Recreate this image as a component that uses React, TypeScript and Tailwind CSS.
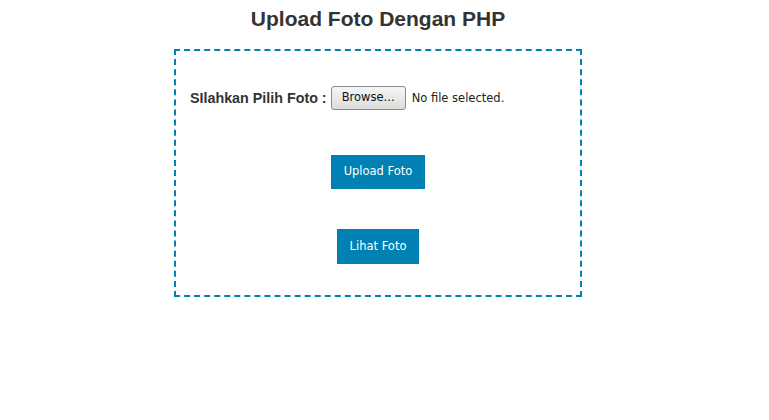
export default function App() {
  const ui = { fontFamily: '"DejaVu Sans", Verdana, sans-serif' };
  return (
    <div className="w-[756px] bg-white" style={{ fontFamily: '"Liberation Sans", Arial, sans-serif' }}>
      <h1 className="pt-[7px] h-[49px] text-center text-[21px] leading-[24px] font-bold text-[#333333]">
        Upload Foto Dengan PHP
      </h1>
      <div className="mx-auto w-[408px] h-[248px] border-2 border-dashed border-[#0080b3] flex flex-col">
        <div className="mt-[35px] h-[24px] flex items-center pl-[14px]">
          <span className="text-[14.3px] font-bold text-[#333333] translate-y-[1px]">SIlahkan Pilih Foto :</span>
          <span
            className="ml-[4px] h-[24px] w-[75px] flex items-center justify-center rounded-[3px] border border-[#8a8a8a] bg-gradient-to-b from-[#f6f6f6] to-[#dcdcdc] text-[11.5px] text-[#111]"
            style={ui}
          >
            Browse...
          </span>
          <span className="ml-[6px] text-[11.5px] text-[#222] translate-y-[1px]" style={ui}>
            No file selected.
          </span>
        </div>
        <div className="mt-[45px] flex justify-center">
          <button className="h-[34px] w-[94px] bg-[#0080b3] text-white text-[11.5px]" style={ui}>
            Upload Foto
          </button>
        </div>
        <div className="mt-[40px] flex justify-center">
          <button className="h-[35px] w-[82px] bg-[#0080b3] text-white text-[11.5px]" style={ui}>
            Lihat Foto
          </button>
        </div>
      </div>
    </div>
  );
}
